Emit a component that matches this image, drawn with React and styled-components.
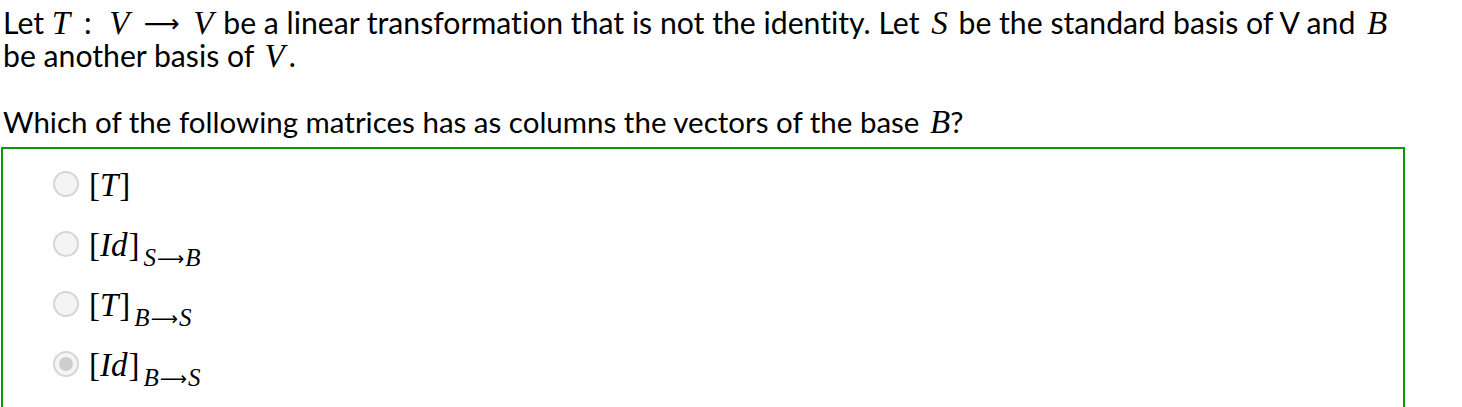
import React from "react";
import styled, { createGlobalStyle } from "styled-components";

const Global = createGlobalStyle`
  html, body { margin: 0; padding: 0; background: #fff; }
  body {
    font-family: "Lato", "Open Sans", sans-serif;
    color: #000;
    font-variant-ligatures: none;
    font-feature-settings: "liga" 0, "dlig" 0, "clig" 0;
  }
`;

const Page = styled.div`
  width: 1402px;
  padding: 6px 0 0 3px;
  line-height: 33px;
`;

const Para = styled.p`
  margin: 0 0 33px 0;
  font-size: ${(p) => p.$size || 29.5}px;
`;

const Question = styled.p`
  margin: 0;
  font-size: 29.5px;
`;

const Var = styled.span`
  font-family: "Liberation Serif", serif;
  font-style: italic;
  font-size: 33px;
  line-height: 0;
  margin-left: ${(p) => p.$ml || 0}px;
  margin-right: ${(p) => p.$mr || 0}px;
`;

const Rel = styled.span`
  font-family: "Liberation Serif", serif;
  font-size: 33px;
  line-height: 0;
  margin: 0 ${(p) => p.$mr || 0}px 0 ${(p) => p.$ml || 0}px;
`;

const Arrow = styled.span`
  display: inline-block;
  font-family: "DejaVu Sans", sans-serif;
  font-size: ${(p) => p.$size}px;
  line-height: 0;
  font-style: normal;
  transform: translateY(${(p) => p.$dy || 0}px);
  margin: 0 ${(p) => p.$mr || 0}px 0 ${(p) => p.$ml || 0}px;
`;

const Box = styled.div`
  box-sizing: border-box;
  margin: 9px 0 0 -2px;
  width: 1404px;
  border: 2px solid #0c990c;
  border-bottom: none;
  padding: 5px 0 20px 50px;
  display: flex;
  flex-direction: column;
`;

const Option = styled.label`
  display: flex;
  align-items: center;
  gap: 10px;
  height: 60px;
`;

const Radio = styled.span`
  box-sizing: border-box;
  width: 26px;
  height: 26px;
  flex: none;
  border-radius: 50%;
  border: 2px solid #d6d6d6;
  background: #f4f4f4;
  display: flex;
  align-items: center;
  justify-content: center;
  &::after {
    content: "";
    width: 14px;
    height: 14px;
    border-radius: 50%;
    background: ${(p) => (p.$checked ? "#cdcdcd" : "transparent")};
  }
`;

const Formula = styled.span`
  font-family: "Liberation Serif", serif;
  font-size: 33px;
  line-height: 33px;
  margin-top: 3px;
  white-space: nowrap;
`;

const It = styled.i`
  padding-right: 1px;
`;

const Sub = styled.span`
  font-style: italic;
  font-size: 25px;
  line-height: 0;
  vertical-align: -10px;
  margin-left: 4px;
`;

const options = [
  { main: "T", sub: null, checked: false },
  { main: "Id", sub: ["S", "B"], checked: false },
  { main: "T", sub: ["B", "S"], checked: false },
  { main: "Id", sub: ["B", "S"], checked: true },
];

export default function App() {
  return (
    <>
      <Global />
      <Page>
        <Para $size={30.2}>
          Let <Var>T</Var>
          <Rel $ml={13} $mr={17}>:</Rel>
          <Var>V</Var>
          <Arrow $size={25} $ml={14} $mr={14} $dy={-2}>⟶</Arrow>
          <Var $mr={2}>V</Var> be a linear transformation that is not the
          identity. Let <Var $ml={4} $mr={3}>S</Var> be the standard basis of V and{" "}
          <Var $ml={4}>B</Var> be another basis of <Var $ml={3} $mr={4}>V</Var>.
        </Para>
        <Question>
          Which of the following matrices has as columns the vectors of the
          base <Var $ml={3}>B</Var>?
        </Question>
        <Box>
          {options.map((o, i) => (
            <Option key={i}>
              <Radio $checked={o.checked} />
              <Formula>
                [<It>{o.main}</It>]
                {o.sub && (
                  <Sub>
                    {o.sub[0]}
                    <Arrow $size={19} $ml={1} $mr={1} $dy={-1}>⟶</Arrow>
                    {o.sub[1]}
                  </Sub>
                )}
              </Formula>
            </Option>
          ))}
        </Box>
      </Page>
    </>
  );
}
